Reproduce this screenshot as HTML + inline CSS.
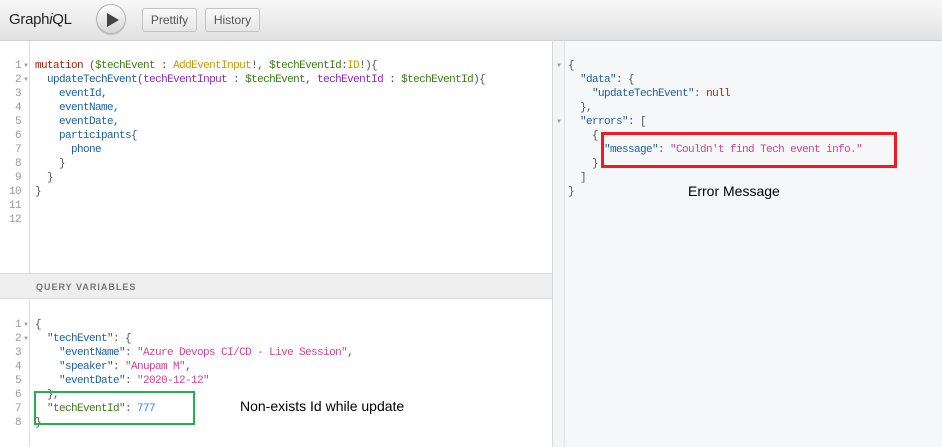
<!DOCTYPE html>
<html><head><meta charset="utf-8"><style>
*{margin:0;padding:0;box-sizing:border-box}
body{width:942px;height:447px;overflow:hidden;background:#fff;font-family:"Liberation Sans",sans-serif;position:relative}
.top{position:absolute;left:0;top:0;width:942px;height:41px;background:linear-gradient(#f7f7f7,#e2e2e2);border-bottom:1px solid #d0d0d0}
.title{position:absolute;left:9px;top:11px;font-size:15px;color:#222;letter-spacing:-0.3px}
.run{position:absolute;left:96px;top:4px;width:30px;height:30px;border-radius:50%;background:linear-gradient(#fdfdfd,#d6d6d6);border:1px solid #b5b5b5;box-shadow:0 1px 1px rgba(0,0,0,.15)}
.run svg{position:absolute;left:10px;top:8px}
.btn{position:absolute;top:8px;height:24px;border:1px solid #c4c4c4;border-radius:3px;background:linear-gradient(#f9f9f9,#e6e6e6);font-size:12px;color:#555;line-height:22px;text-align:center}
.code{position:absolute;font-family:"Liberation Mono",monospace;font-size:11px;letter-spacing:-0.6px;line-height:14px;white-space:pre;color:#555}
.ln{position:absolute;font-family:"Liberation Mono",monospace;font-size:11px;letter-spacing:-0.6px;line-height:14px;white-space:pre;color:#999;text-align:right;width:21px}
.fold{position:absolute;font-size:6px;color:#999;line-height:14px}
.k{color:#B11A04}.v{color:#397D13}.t{color:#CA9800}.d{color:#1F61A0}.a{color:#8B2BB9}.s{color:#D64292}.n{color:#2882F9}.p{color:#1F61A0}
</style></head><body>
<div class="top">
<div class="title">Graph<i>i</i>QL</div>
<div class="run"><svg width="12" height="14"><path d="M0 0L12 7L0 14Z" fill="#444"/></svg></div>
<div class="btn" style="left:142px;width:55px">Prettify</div>
<div class="btn" style="left:205px;width:55px">History</div>
</div>
<div style="position:absolute;left:0;top:41px;width:30px;height:232px;background:#fff;border-right:1px solid #ddd"></div>
<div style="position:absolute;left:552px;top:41px;width:13px;height:406px;background:#f3f4f5;border-left:1px solid #d6d6d6;border-right:1px solid #e0e0e0"></div>
<div style="position:absolute;left:565px;top:41px;width:377px;height:406px;background:#f6f7f8"></div>
<div class="ln" style="left:0;top:59px">1
2
3
4
5
6
7
8
9
10
11
12</div>
<div class="fold" style="left:23px;top:59px">▼<br>▼</div>
<div class="code" style="left:35px;top:59px"><span class="k">mutation</span> (<span class="v">$techEvent</span> : <span class="t">AddEventInput</span>!, <span class="v">$techEventId</span>:<span class="t">ID</span>!){
  <span class="d">updateTechEvent</span>(<span class="a">techEventInput</span> : <span class="v">$techEvent</span>, <span class="a">techEventId</span> : <span class="v">$techEventId</span>){
    <span class="d">eventId</span>,
    <span class="d">eventName</span>,
    <span class="d">eventDate</span>,
    <span class="d">participants</span>{
      <span class="d">phone</span>
    }
  }
}</div>
<div style="position:absolute;left:0;top:273px;width:552px;height:26px;background:#eeeeee;border-top:1px solid #ddd;border-bottom:1px solid #ddd;font-size:9px;font-weight:bold;letter-spacing:1px;color:#777;padding:8px 0 0 36px">QUERY VARIABLES</div>
<div style="position:absolute;left:0;top:299px;width:30px;height:148px;border-right:1px solid #ddd"></div>
<div class="ln" style="left:0;top:318px">1
2
3
4
5
6
7
8</div>
<div class="fold" style="left:23px;top:318px">▼<br>▼</div>
<div class="code" style="left:35px;top:318px">{
  <span class="p">"techEvent"</span>: {
    <span class="p">"eventName"</span>: <span class="s">"Azure Devops CI/CD - Live Session"</span>,
    <span class="p">"speaker"</span>: <span class="s">"Anupam M"</span>,
    <span class="p">"eventDate"</span>: <span class="s">"2020-12-12"</span>
  },
  <span class="v">"techEventId"</span>: <span class="n">777</span>
}</div>
<div style="position:absolute;left:34px;top:391px;width:161px;height:34px;border:2px solid #22b14c"></div>
<div style="position:absolute;left:240px;top:398px;font-size:14px;color:#000">Non-exists Id while update</div>
<div class="fold" style="left:556px;top:59px">▼<br><br><br><br>▼</div>
<div class="code" style="left:568px;top:59px">{
  <span class="p">"data"</span>: {
    <span class="p">"updateTechEvent"</span>: <span class="k">null</span>
  },
  <span class="p">"errors"</span>: [
    {
      <span class="p">"message"</span>: <span class="s">"Couldn't find Tech event info."</span>
    }
  ]
}</div>
<div style="position:absolute;left:601px;top:132px;width:296px;height:36px;border:3px solid #ed1c24"></div>
<div style="position:absolute;left:688px;top:183px;font-size:14px;color:#000">Error Message</div>
</body></html>
